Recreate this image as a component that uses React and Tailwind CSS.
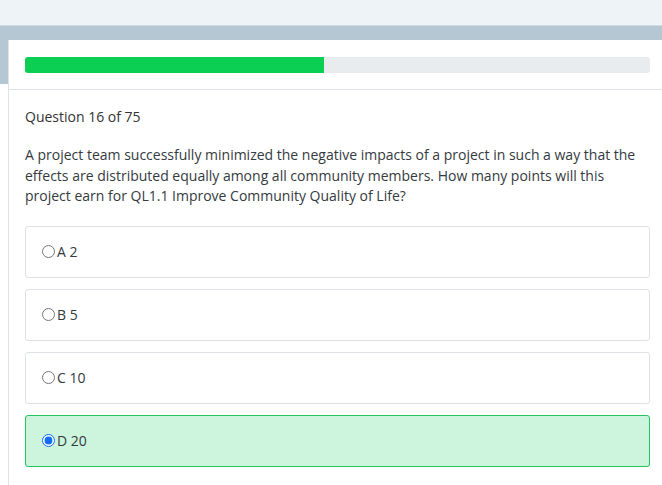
import React, { useState } from 'react';

const options = [
    { key: 'A', label: 'A 2' },
    { key: 'B', label: 'B 5' },
    { key: 'C', label: 'C 10' },
    { key: 'D', label: 'D 20' },
];

const App = () => {
    const [answer, setAnswer] = useState('D');
    const progress = 299; // px of 624

    return (
        <div className="min-h-[485px] w-[662px] overflow-hidden bg-white text-[14px] text-[#343a40]" style={{ fontFamily: '"Open Sans", "Noto Sans", sans-serif' }}>
            {/* top strip */}
            <div className="h-[26px] bg-[#eef3f7] border-b border-[#d3dbe2]" />
            <div className="relative pt-[14px]">
                <div className="absolute left-0 right-0 top-0 h-[58px] bg-[#b5c7d3]" />

                {/* Card */}
                <div className="relative ml-2 w-[658px] bg-white border-l border-[#dfe3e7]">
                    <div className="px-4 pt-[17px] pb-4 border-b border-[#dee2e6]">
                        <div className="h-4 w-full bg-[#e8ecef] rounded-[3px] overflow-hidden">
                            <div className="h-full bg-[#0acf52]" style={{ width: progress }} />
                        </div>
                    </div>

                    <div className="px-4 pt-4 pb-6">
                        <div className="leading-[21px] text-[#333]">Question 16 of 75</div>
                        <p className="mt-[18px] leading-[20.5px] pr-2">
                            A project team successfully minimized the negative impacts of a project in such a way that the effects are distributed equally among all community members. How many points will this project earn for QL1.1 Improve Community Quality of Life?
                        </p>

                        <div className="mt-[19px] flex flex-col gap-[11px]">
                            {options.map((o) => {
                                const selected = answer === o.key;
                                return (
                                    <label
                                        key={o.key}
                                        className={`h-[52px] flex items-center px-4 rounded-[3px] border cursor-pointer ${
                                            selected ? 'bg-[#cdf4dc] border-[#22c55e]' : 'bg-white border-[#dee2e6]'
                                        }`}
                                    >
                                        <input
                                            type="radio"
                                            name="answer"
                                            checked={selected}
                                            onChange={() => setAnswer(o.key)}
                                            className="w-[13px] h-[13px] mr-[2px] accent-[#0b6cf6]"
                                        />
                                        <span className="leading-[21px] text-[#343a40]">{o.label}</span>
                                    </label>
                                );
                            })}
                        </div>
                    </div>
                </div>
            </div>
        </div>
    );
};

export default App;
